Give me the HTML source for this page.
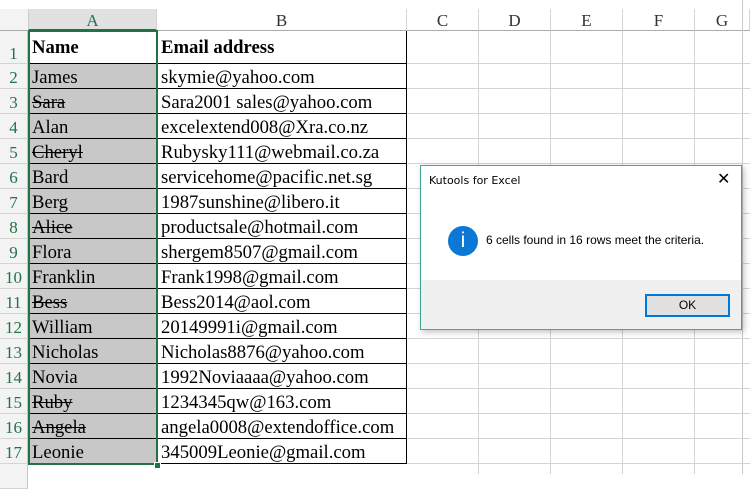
<!DOCTYPE html>
<html><head><meta charset="utf-8"><style>
body{margin:0;width:750px;height:474px;overflow:hidden;background:#fff;position:relative;font-family:"Liberation Serif",serif}
.a{position:absolute}
.rh{position:absolute;left:0;width:28px;background:#f3f3f3;border-bottom:1px solid #d4d4d4;color:#217346;font-size:17px;text-align:center;box-sizing:border-box;border-right:1px solid #c6c6c6;font-family:"Liberation Serif",serif}
.ch{position:absolute;top:9px;height:22px;font-size:17px;color:#333;text-align:center;line-height:24px;border-right:1px solid #d4d4d4;border-bottom:1px solid #ababab;box-sizing:border-box}
.ca{position:absolute;left:29px;width:128px;background:#c8c8c8;border-bottom:1px solid #000;box-sizing:border-box;font-size:18.7px;padding-left:3px;line-height:27px;overflow:hidden;white-space:nowrap}
.cb{position:absolute;left:157px;width:250px;border-bottom:1px solid #000;border-right:1px solid #000;box-sizing:border-box;font-size:18.7px;padding-left:3px;line-height:27px;border-left:1px solid #000;overflow:hidden;white-space:nowrap}
.s{text-decoration:line-through}
.gl{position:absolute;background:#d4d4d4}
</style></head><body>
<div class="a" style="left:0;top:9px;width:29px;height:22px;background:#f3f3f3;border-right:1px solid #ccc;border-bottom:1px solid #ababab;box-sizing:border-box"></div>
<div class="ch" style="left:29px;width:128px;background:#e1e1e1;color:#217346;border-bottom:2px solid #217346">A</div>
<div class="ch" style="left:157px;width:250px">B</div>
<div class="ch" style="left:407px;width:72px">C</div>
<div class="ch" style="left:479px;width:72px">D</div>
<div class="ch" style="left:551px;width:72px">E</div>
<div class="ch" style="left:623px;width:72px">F</div>
<div class="ch" style="left:695px;width:55px">G</div>
<div class="gl" style="left:478px;top:31px;width:1px;height:443px"></div>
<div class="gl" style="left:550px;top:31px;width:1px;height:443px"></div>
<div class="gl" style="left:622px;top:31px;width:1px;height:443px"></div>
<div class="gl" style="left:694px;top:31px;width:1px;height:443px"></div>
<div class="gl" style="left:742px;top:0;width:1px;height:474px;background:#c8c8c8"></div>
<div class="a" style="left:407px;top:63px;width:343px;height:1px;background:#d4d4d4"></div>
<div class="a" style="left:407px;top:64px;width:343px;height:410px;background:repeating-linear-gradient(to bottom,transparent 0,transparent 24px,#d4d4d4 24px,#d4d4d4 25px)"></div>

<div class="rh" style="top:31px;height:33px;line-height:46px">1</div>
<div class="rh" style="top:64px;height:25px;line-height:27px">2</div>
<div class="rh" style="top:89px;height:25px;line-height:27px">3</div>
<div class="rh" style="top:114px;height:25px;line-height:27px">4</div>
<div class="rh" style="top:139px;height:25px;line-height:27px">5</div>
<div class="rh" style="top:164px;height:25px;line-height:27px">6</div>
<div class="rh" style="top:189px;height:25px;line-height:27px">7</div>
<div class="rh" style="top:214px;height:25px;line-height:27px">8</div>
<div class="rh" style="top:239px;height:25px;line-height:27px">9</div>
<div class="rh" style="top:264px;height:25px;line-height:27px">10</div>
<div class="rh" style="top:289px;height:25px;line-height:27px">11</div>
<div class="rh" style="top:314px;height:25px;line-height:27px">12</div>
<div class="rh" style="top:339px;height:25px;line-height:27px">13</div>
<div class="rh" style="top:364px;height:25px;line-height:27px">14</div>
<div class="rh" style="top:389px;height:25px;line-height:27px">15</div>
<div class="rh" style="top:414px;height:25px;line-height:27px">16</div>
<div class="rh" style="top:439px;height:25px;line-height:27px">17</div>
<div class="rh" style="top:464px;height:25px;line-height:27px;color:#333"></div>

<div class="ca" style="top:31px;height:33px;line-height:34px;background:#fff;font-weight:bold">Name</div>
<div class="cb" style="top:31px;height:33px;line-height:34px;font-weight:bold">Email address</div>
<div class="ca" style="top:64px;height:25px">James</div><div class="cb" style="top:64px;height:25px">skymie@yahoo.com</div>
<div class="ca s" style="top:89px;height:25px">Sara</div><div class="cb" style="top:89px;height:25px">Sara2001 sales@yahoo.com</div>
<div class="ca" style="top:114px;height:25px">Alan</div><div class="cb" style="top:114px;height:25px">excelextend008@Xra.co.nz</div>
<div class="ca s" style="top:139px;height:25px">Cheryl</div><div class="cb" style="top:139px;height:25px">Rubysky111@webmail.co.za</div>
<div class="ca" style="top:164px;height:25px">Bard</div><div class="cb" style="top:164px;height:25px">servicehome@pacific.net.sg</div>
<div class="ca" style="top:189px;height:25px">Berg</div><div class="cb" style="top:189px;height:25px">1987sunshine@libero.it</div>
<div class="ca s" style="top:214px;height:25px">Alice</div><div class="cb" style="top:214px;height:25px">productsale@hotmail.com</div>
<div class="ca" style="top:239px;height:25px">Flora</div><div class="cb" style="top:239px;height:25px">shergem8507@gmail.com</div>
<div class="ca" style="top:264px;height:25px">Franklin</div><div class="cb" style="top:264px;height:25px">Frank1998@gmail.com</div>
<div class="ca s" style="top:289px;height:25px">Bess</div><div class="cb" style="top:289px;height:25px">Bess2014@aol.com</div>
<div class="ca" style="top:314px;height:25px">William</div><div class="cb" style="top:314px;height:25px">20149991i@gmail.com</div>
<div class="ca" style="top:339px;height:25px">Nicholas</div><div class="cb" style="top:339px;height:25px">Nicholas8876@yahoo.com</div>
<div class="ca" style="top:364px;height:25px">Novia</div><div class="cb" style="top:364px;height:25px">1992Noviaaaa@yahoo.com</div>
<div class="ca s" style="top:389px;height:25px">Ruby</div><div class="cb" style="top:389px;height:25px">1234345qw@163.com</div>
<div class="ca s" style="top:414px;height:25px">Angela</div><div class="cb" style="top:414px;height:25px">angela0008@extendoffice.com</div>
<div class="ca" style="top:439px;height:25px;border-bottom:none">Leonie</div><div class="cb" style="top:439px;height:25px">345009Leonie@gmail.com</div>
<div class="a" style="left:28px;top:30px;width:130px;height:435px;border:2px solid #217346;box-sizing:border-box"></div>
<div class="a" style="left:154px;top:462px;width:5px;height:5px;background:#217346;border:1px solid #fff"></div>

<div class="a" style="left:420px;top:165px;width:322px;height:165px;border:1px solid #3fa89a;box-sizing:border-box;background:#fff;font-family:'DejaVu Sans','Liberation Sans',sans-serif;box-shadow:2px 2px 6px rgba(0,0,0,.25)">
<div class="a" style="left:8px;top:8px;font-size:11px;color:#000">Kutools for Excel</div>
<div class="a" style="left:296px;top:3px;font-size:16px;color:#000">✕</div>
<div class="a" style="left:27px;top:60px;width:30px;height:30px;border-radius:50%;background:#0a78d4;color:#fff;font-size:21px;text-align:center;line-height:30px;font-family:'Liberation Sans',sans-serif">i</div>
<div class="a" style="left:65px;top:67px;color:#000;font-family:'Liberation Sans',sans-serif;font-size:12px">6 cells found in 16 rows meet the criteria.</div>
<div class="a" style="left:0;top:114px;width:320px;height:49px;background:#f0f0f0"></div>
<div class="a" style="left:224px;top:128px;width:85px;height:23px;border:1px solid #0078d7;box-sizing:border-box;background:#e1e1e1;text-align:center;line-height:21px;font-size:12px;font-family:'Liberation Sans',sans-serif;box-shadow:inset 0 0 0 1px #0078d7">OK</div>
</div>
</body></html>
